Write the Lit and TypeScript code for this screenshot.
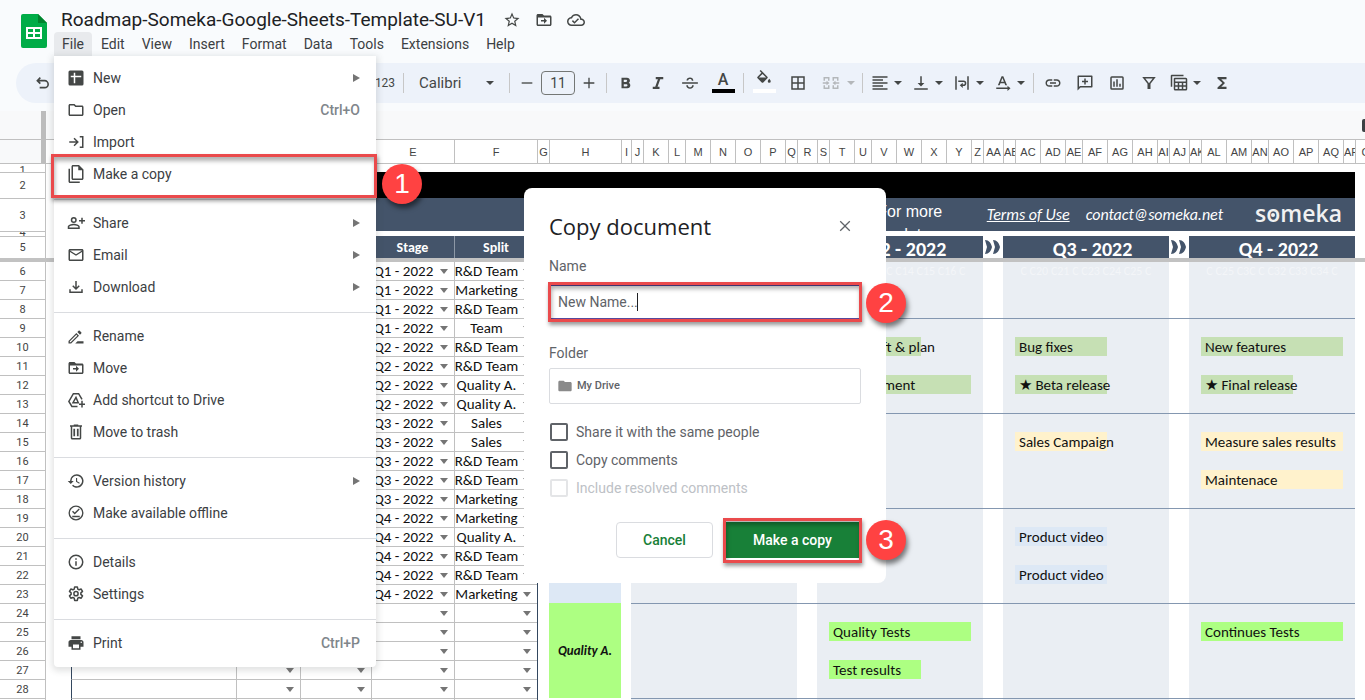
import { LitElement, html, css, svg, nothing } from "lit";
import { customElement, property } from "lit/decorators.js";

/* Icons share a 24-unit grid; each entry holds the drawing for one glyph. */
const ICONS: Record<string, unknown> = {
  star: svg`<path d="M22 9.24l-7.19-.62L12 2 9.19 8.63 2 9.24l5.46 4.73L5.82 21 12 17.27 18.18 21l-1.63-7.03L22 9.24zM12 15.4l-3.76 2.27 1-4.28-3.32-2.88 4.38-.38L12 6.1l1.71 4.04 4.38.38-3.32 2.88 1 4.28L12 15.4z"/>`,
  move: svg`<path fill-rule="evenodd" d="M20 6h-8l-2-2H4c-1.1 0-2 .9-2 2v12c0 1.1.9 2 2 2h16c1.1 0 2-.9 2-2V8c0-1.1-.9-2-2-2zm0 12H4V8.500h16v9.500zM12 17l4-4-4-4v3H8v2h4z"/>`,
  cloud: svg`<path d="M19.35 10.04C18.67 6.59 15.64 4 12 4 9.11 4 6.61 5.64 5.36 8.04 2.34 8.36 0 10.91 0 14c0 3.31 2.69 6 6 6h13c2.76 0 5-2.24 5-5 0-2.64-2.05-4.78-4.65-4.96zM19 18H6c-2.21 0-4-1.79-4-4 0-2.05 1.53-3.76 3.56-3.97l1.07-.11.5-.95C8.08 7.14 9.94 6 12 6c2.62 0 4.88 1.86 5.39 4.43l.3 1.5 1.53.11c1.56.1 2.78 1.41 2.78 2.96 0 1.65-1.35 3-3 3zm-9-3.82l-2.09-2.09L6.5 13.5 10 17l6.01-6.01-1.41-1.41z"/>`,
  undo: svg`<path d="M8 4L3.5 8.5 8 13M4 8.5h10.5a5 5 0 0 1 0 10.5H7" fill="none" stroke="currentColor" stroke-width="2.4"/>`,
  minus: svg`<path d="M4 11h16v2H4z"/>`,
  plus: svg`<path d="M11 4h2v7h7v2h-7v7h-2v-7H4v-2h7z"/>`,
  bold: svg`<path d="M15.6 11.79c.97-.67 1.65-1.77 1.65-2.79 0-2.26-1.75-4-4-4H6v14h8.04c2.09 0 3.71-1.7 3.71-3.79 0-1.52-.86-2.82-2.15-3.42zM9 7.5h3c.83 0 1.5.67 1.5 1.5s-.67 1.5-1.5 1.5H9v-3zm3.5 9H9v-3h3.5c.83 0 1.5.67 1.5 1.5s-.67 1.5-1.5 1.5z"/>`,
  italic: svg`<path d="M9 4v3h2.9L8.3 17H5v3h9v-3h-2.6L15 7h4V4z"/>`,
  strike: svg`<path d="M1.500 11h21v2h-21zM16.500 9C16.500 6 14.500 4.500 12 4.500S7.300 6 7.300 8.700h2.200C9.500 7.200 10.400 6.500 12 6.500s2.400.9 2.400 2.500zM7 15c0 3 2.200 4.700 5 4.700s5-1.700 5-4.700h-2.200c0 1.700-1.100 2.700-2.800 2.700S9.200 16.700 9.200 15z"/>`,
  fill: svg`<path d="M16.560 8.940L7.620 0 6.210 1.410l2.380 2.380-5.150 5.150a1.500 1.500 0 0 0 0 2.120l5.500 5.500c.29.29.68.44 1.060.44s.77-.15 1.060-.44l5.500-5.500c.59-.58.59-1.530 0-2.120zM5.210 10L10 5.210 14.790 10H5.210zM19 11.500s-2 2.170-2 3.500a2 2 0 0 0 4 0c0-1.330-2-3.500-2-3.500z"/>`,
  borders: svg`<path d="M3 3v18h18V3H3zm8 16H5v-6h6v6zm0-8H5V5h6v6zm8 8h-6v-6h6v6zm0-8h-6V5h6v6z"/>`,
  merge: svg`<path d="M2 4h8v5H8V6H4v3H2zM14 4h8v5h-2V6h-4v3h-2zM2 15h2v3h4v-3h2v5H2zM14 15h2v3h4v-3h2v5h-8zM1 11h5V9l4 3-4 3v-2H1zM23 11h-5V9l-4 3 4 3v-2h5z"/>`,
  align: svg`<path d="M2 3h20v2H2zM2 7h14v2H2zM2 11h20v2H2zM2 15h14v2H2zM2 19h20v2H2z"/>`,
  valign: svg`<path d="M16.500 12H13V3h-2v9H7.500l4.500 4.500zM3 19v2h18v-2z"/>`,
  wrap: svg`<path d="M3 3h2v18H3zM19 3h2v18h-2zM7 8.500h7a3.750 3.750 0 0 1 0 7.500h-1v2.500L9 15l4-3.500V14h1a1.750 1.750 0 0 0 0-3.500H7z"/>`,
  rotate: svg`<path d="M10.100 3h2.300l5 12h-2.300l-1.100-2.800H8.600L7.500 15H5.200zm-.8 7.200h3.900L11.250 5.300zM3 18h15v-2.500l4 3.500-4 3.500V20H3z"/>`,
  link: svg`<path d="M3.900 12c0-1.710 1.390-3.100 3.100-3.100h4V7H7c-2.760 0-5 2.240-5 5s2.240 5 5 5h4v-1.900H7c-1.710 0-3.100-1.390-3.100-3.100zM8 13h8v-2H8v2zm9-6h-4v1.900h4c1.710 0 3.100 1.390 3.100 3.100s-1.390 3.100-3.100 3.100h-4V17h4c2.760 0 5-2.240 5-5s-2.240-5-5-5z"/>`,
  comment: svg`<path fill-rule="evenodd" d="M3 2h18a1 1 0 0 1 1 1v14a1 1 0 0 1-1 1H6l-4 4V3a1 1 0 0 1 1-1zm1 2v13.200L5.200 16H20V4zM11 6h2v3h3v2h-3v3h-2v-3H8V9h3z"/>`,
  chart: svg`<path fill-rule="evenodd" d="M5 3h14a2 2 0 0 1 2 2v14a2 2 0 0 1-2 2H5a2 2 0 0 1-2-2V5a2 2 0 0 1 2-2zm0 2v14h14V5zM7 10h2v7H7zM11 7h2v10h-2zM15 13h2v4h-2z"/>`,
  filter: svg`<path fill-rule="evenodd" d="M3 4h18l-7 9v7h-4v-7zm4.100 2l4.900 6.300L16.900 6z"/>`,
  tableview: svg`<path d="M2 1h16v2H3v14H1V2zM6 5h15a2 2 0 0 1 2 2v13a2 2 0 0 1-2 2H7a2 2 0 0 1-2-2V6zm1 2v3h14V7zm0 5v3h3.300v-3zm5.300 0v3h3.400v-3zm5.400 0v3H21v-3zM7 17v3h3.300v-3zm5.300 0v3h3.400v-3zm5.400 0v3H21v-3z" fill-rule="evenodd"/>`,
  sigma: svg`<path d="M18 4H6v2l6.500 6L6 18v2h12v-3h-7l5-5-5-5h7z"/>`,
  grid: svg`<path fill-rule="evenodd" d="M4 2h16a2 2 0 0 1 2 2v16a2 2 0 0 1-2 2H4a2 2 0 0 1-2-2V4a2 2 0 0 1 2-2zm5 3v4H5v2h4v8h2v-8h8V9h-8V5z"/>`,
  folder: svg`<path d="M9.170 6l2 2H20v10H4V6h5.170M10 4H4c-1.100 0-2 .9-2 2v12c0 1.100.9 2 2 2h16c1.100 0 2-.9 2-2V8c0-1.100-.9-2-2-2h-8l-2-2z"/>`,
  folderSolid: svg`<path d="M10 4H4c-1.100 0-2 .9-2 2v12c0 1.100.9 2 2 2h16c1.100 0 2-.9 2-2V8c0-1.100-.9-2-2-2h-8l-2-2z"/>`,
  import: svg`<path d="M3 11h9L8.700 7.700l1.400-1.400L15.800 12l-5.700 5.700-1.400-1.400L12 13H3zM17 4h5v16h-5v-2h3V6h-3z"/>`,
  copy: svg`<path d="M16 0H8c-1.100 0-2 .9-2 2v16c0 1.100.9 2 2 2h12c1.100 0 2-.9 2-2V6zm4 18H8V2h7v5h5zM4 5H2v17c0 1.100.9 2 2 2h13v-2H4z"/>`,
  share: svg`<path d="M9 12a4 4 0 1 0 0-8 4 4 0 0 0 0 8zm0-6a2 2 0 1 1 0 4 2 2 0 0 1 0-4zm0 7c-2.670 0-8 1.340-8 4v3h16v-3c0-2.660-5.330-4-8-4zm6 5H3v-1c0-.7 3.100-2 6-2s6 1.300 6 2zM19 5h2v3h3v2h-3v3h-2v-3h-3V8h3z"/>`,
  email: svg`<path d="M22 6c0-1.100-.9-2-2-2H4c-1.100 0-2 .9-2 2v12c0 1.100.9 2 2 2h16c1.100 0 2-.9 2-2V6zm-2 0l-8 5-8-5h16zm0 12H4V8l8 5 8-5v10z"/>`,
  download: svg`<path d="M17 11l-1.410-1.410L13 12.170V4h-2v8.170L8.410 9.590 7 11l5 5 5-5zM3 15v5h18v-5h-2v3H5v-3z"/>`,
  rename: svg`<path fill-rule="evenodd" d="M2 18.500V22h3.500L16 11.500 12.500 8zM12.500 10.300l1.200 1.200L4.900 20.300H3.800v-1.200zM19 8.500c.4-.4.4-1 0-1.400L16.900 5c-.4-.4-1-.4-1.400 0l-1.700 1.700 3.500 3.500zM14 19h8v3H11z"/>`,
  drive: svg`<path d="M14 20.500H6.500L2.500 14 8.500 3.500h7l4.500 7.700" fill="none" stroke="currentColor" stroke-width="2"/><path d="M12 8.500L8 15.500h7z" fill="none" stroke="currentColor" stroke-width="2"/><path d="M19 13h2v3.500h3v2h-3V22h-2v-3.500h-3v-2h3z"/>`,
  trash: svg`<path fill-rule="evenodd" d="M15 3V2H9v1H4v2h1v15c0 1.100.9 2 2 2h10c1.100 0 2-.9 2-2V5h1V3zM7 5h10v15H7zM8.500 7.500h2.300v10H8.500zM13.200 7.500h2.300v10h-2.300z"/>`,
  history: svg`<path d="M13 3a9 9 0 0 0-9 9H1l4 4 4-4H6a7 7 0 1 1 2.100 5L6.700 18.400A9 9 0 1 0 13 3zm-1 5v5l4.300 2.500.7-1.200-3.500-2.100V8z"/>`,
  offline: svg`<path d="M12 2a10 10 0 1 0 0 20 10 10 0 0 0 0-20zm0 18.200a8.200 8.200 0 1 1 0-16.400 8.200 8.200 0 0 1 0 16.400zM7 15.500h10v2H7zM10.300 14L6.700 10.400 8 9.100l2.300 2.300 5.400-5.400L17 7.300z"/>`,
  info: svg`<path d="M11 7h2v2h-2zm0 4h2v6h-2zm1-9a10 10 0 1 0 0 20 10 10 0 0 0 0-20zm0 18a8 8 0 1 1 0-16 8 8 0 0 1 0 16z"/>`,
  gear: svg`<path fill="none" stroke="currentColor" stroke-width="2" stroke-linejoin="round" d="M10.200 2.500h3.600l.6 2.900 1.700 1 2.800-1 1.800 3.100-2.200 2v2l2.200 2-1.800 3.100-2.800-1-1.700 1-.6 2.900h-3.600l-.6-2.900-1.700-1-2.800 1-1.800-3.100 2.200-2v-2l-2.200-2 1.800-3.100 2.800 1 1.700-1z"/><circle cx="12" cy="11.500" r="2.800" fill="none" stroke="currentColor" stroke-width="2"/>`,
  print: svg`<path d="M19 8H5c-1.660 0-3 1.340-3 3v6h4v4h12v-4h4v-6c0-1.660-1.340-3-3-3zm-3 11H8v-5h8v5zm3-7c-.55 0-1-.45-1-1s.45-1 1-1 1 .45 1 1-.45 1-1 1zm-1-9H6v4h12V3z"/>`,
  close: svg`<path d="M19 6.200L17.800 5 12 10.800 6.200 5 5 6.200l5.800 5.800L5 17.800 6.200 19l5.800-5.800 5.800 5.800 1.200-1.200-5.800-5.800z"/>`,
};

const icon = (name: string) =>
  html`<svg class="icon" viewBox="0 0 24 24" aria-hidden="true">${ICONS[name]}</svg>`;

const base = css`
  *, *::before, *::after { box-sizing: border-box; }
  button { border: 0; padding: 0; margin: 0; background: none; font: inherit; color: inherit; }
  .icon { width: 18px; height: 18px; fill: currentColor; flex: none; display: block; }
  .badge {
    position: absolute; width: 40px; height: 40px; border-radius: 50%;
    background: #ff4242; color: #fff; display: grid; place-items: center;
    font: 28px/40px "Liberation Sans", sans-serif;
    box-shadow: 2px 4px 5px rgba(0, 0, 0, .5);
  }
  .frame {
    position: absolute; border: 3px solid #ea4a4c; pointer-events: none;
    box-shadow: 1px 3px 4px rgba(0, 0, 0, .4), inset 1px 4px 4px rgba(0, 0, 0, .3);
  }
`;

/* ---------- file menu ---------- */

type Entry = { icon: string; label: string; keys?: string; sub?: boolean; mark?: boolean };
const FILE_MENU: Entry[][] = [
  [
    { icon: "grid", label: "New", sub: true },
    { icon: "folder", label: "Open", keys: "Ctrl+O" },
    { icon: "import", label: "Import" },
    { icon: "copy", label: "Make a copy", mark: true },
  ],
  [
    { icon: "share", label: "Share", sub: true },
    { icon: "email", label: "Email", sub: true },
    { icon: "download", label: "Download", sub: true },
  ],
  [
    { icon: "rename", label: "Rename" },
    { icon: "move", label: "Move" },
    { icon: "drive", label: "Add shortcut to Drive" },
    { icon: "trash", label: "Move to trash" },
  ],
  [
    { icon: "history", label: "Version history", sub: true },
    { icon: "offline", label: "Make available offline" },
  ],
  [
    { icon: "info", label: "Details" },
    { icon: "gear", label: "Settings" },
  ],
  [{ icon: "print", label: "Print", keys: "Ctrl+P" }],
];

@customElement("file-menu")
export class FileMenu extends LitElement {
  static styles = [base, css`
    :host {
      display: block; width: 322px; padding: 6px 0 8px; background: #fff;
      border-radius: 0 0 4px 4px; color: #3c4043;
      font: 14px/32px Roboto, sans-serif;
      box-shadow: 0 2px 6px 2px rgba(60, 64, 67, .15);
    }
    .item {
      position: relative; display: flex; align-items: center; width: 100%;
      height: 32px; padding: 0 16px 0 13px; text-align: left;
    }
    .icon { margin-right: 8px; color: #444746; }
    .keys { margin-left: auto; color: #80868b; font-weight: 500; }
    .arrow {
      margin-left: auto; border: 4px solid transparent;
      border-left: 7px solid #757575; border-right: 0;
    }
    hr { border: 0; border-top: 1px solid #dadce0; margin: 9px 0 7px; }
    .frame { inset: -4px -1px -8px -3px; }
    .badge { left: 328px; top: 6px; }
  `];

  render() {
    return FILE_MENU.map((group, i) => html`
      ${i ? html`<hr>` : nothing}
      ${group.map((e) => html`
        <button class="item">
          ${icon(e.icon)}<span>${e.label}</span>
          ${e.keys ? html`<span class="keys">${e.keys}</span>` : nothing}
          ${e.sub ? html`<span class="arrow"></span>` : nothing}
          ${e.mark ? html`<span class="frame"></span><span class="badge">1</span>` : nothing}
        </button>`)}
    `);
  }
}

/* ---------- copy dialog ---------- */

@customElement("copy-dialog")
export class CopyDialog extends LitElement {
  static styles = [base, css`
    :host {
      display: block; width: 362px; padding: 22px 25px 25px; background: #fff;
      border-radius: 8px; color: #5f6368; font: 14px/20px Roboto, sans-serif;
    }
    .head { display: flex; align-items: center; justify-content: space-between; }
    h1 { margin: 0; font: 400 22px/30px "Open Sans", sans-serif; color: #202124; }
    .close { padding: 7px; }
    .close .icon { width: 18px; height: 18px; color: #5f6368; }
    .label { display: block; margin: 14px 0 8px; }
    .field { position: relative; }
    .text {
      display: block; width: 100%; height: 36px; padding: 0 7px; margin: 0;
      border: 2px solid #5a4a9c; border-radius: 2px; outline: 0; background: #fff;
      font: 14px/20px Roboto, sans-serif; color: #5f6368;
    }
    .caret { position: absolute; left: 88px; top: 9px; width: 1px; height: 18px; background: #202124; }
    .field .frame { inset: -2px -1px; }
    .field .badge { left: 317px; top: -1px; }
    .field + .label { margin-top: 23px; margin-bottom: 5px; }
    .folder {
      display: flex; align-items: center; gap: 4px; width: 100%; height: 36px; padding: 0 7px;
      border: 1px solid #dadce0; border-radius: 2px; font-size: 11px; font-weight: 500;
    }
    .folder .icon { width: 16px; height: 16px; color: #8a8a8a; }
    .checks { display: grid; gap: 8px; margin: 18px 0 24px; }
    .check { display: flex; align-items: center; gap: 8px; }
    .check input {
      appearance: none; width: 18px; height: 18px; margin: 0 0 0 1px;
      border: 2px solid #5f6368; border-radius: 2px; background: #fff;
    }
    .check.off { color: #bdc1c6; }
    .check.off input { border-color: #e4e5e7; }
    .actions { display: flex; justify-content: flex-end; gap: 13px; font-weight: 500; }
    .cancel {
      width: 97px; height: 36px; border: 1px solid #dadce0; border-radius: 4px; color: #188038;
    }
    .primary { position: relative; width: 133px; height: 36px; margin-right: 2px; background: #188038; color: #fff; }
    .primary .frame { inset: -4px -3px -5px; }
    .primary .badge { left: 140px; top: -2px; font-weight: 400; }
  `];

  render() {
    return html`
      <div class="head">
        <h1>Copy document</h1>
        <button class="close" aria-label="Close">${icon("close")}</button>
      </div>
      <label class="label" for="name">Name</label>
      <div class="field">
        <input class="text" id="name" value="New Name...">
        <span class="caret"></span><span class="frame"></span><span class="badge">2</span>
      </div>
      <label class="label" for="folder">Folder</label>
      <button class="folder" id="folder">${icon("folderSolid")}<span>My Drive</span></button>
      <div class="checks">
        <label class="check"><input type="checkbox">Share it with the same people</label>
        <label class="check"><input type="checkbox">Copy comments</label>
        <label class="check off"><input type="checkbox" disabled>Include resolved comments</label>
      </div>
      <div class="actions">
        <button class="cancel">Cancel</button>
        <button class="primary">Make a copy<span class="frame"></span><span class="badge">3</span></button>
      </div>
    `;
  }
}

/* ---------- sheet ---------- */

const COLUMNS: [string, number][] = [
  ["A", 25], ["B", 165], ["C", 64], ["D", 71], ["E", 83], ["F", 83], ["G", 12], ["H", 72],
  ["I", 10], ["J", 12], ["K", 25], ["L", 17], ["M", 25], ["N", 25], ["O", 25], ["P", 25], ["Q", 12],
  ["R", 20], ["S", 12], ["T", 25], ["U", 17], ["V", 25], ["W", 25], ["X", 25], ["Y", 25], ["Z", 12],
  ["AA", 20], ["AB", 12], ["AC", 25], ["AD", 25], ["AE", 17], ["AF", 25], ["AG", 25], ["AH", 25], ["AI", 12],
  ["AJ", 20], ["AK", 12], ["AL", 25], ["AM", 25], ["AN", 17], ["AO", 25], ["AP", 25], ["AQ", 25], ["AR", 12],
  ["CN", 28],
];
const ROW_HEAD = 46;
const SHEET_WIDTH = COLUMNS.reduce((sum, c) => sum + c[1], ROW_HEAD);

const STAGES = ["Q1", "Q1", "Q1", "Q1", "Q2", "Q2", "Q2", "Q2", "Q3", "Q3", "Q3", "Q3", "Q3", "Q4", "Q4", "Q4", "Q4", "Q4"];
const R = "R&D Team", M = "Marketing", Q = "Quality A.", S = "Sales";
const SPLITS = [R, M, R, "Team", R, R, Q, Q, S, S, R, R, M, M, Q, R, R, M];

type Bar = { row: number; quarter: number; text: string; long?: boolean };
type Lane = { first: number; last: number; tone: string; title?: string };
const LANES: Lane[] = [
  { first: 6, last: 8, tone: "plain" },
  { first: 9, last: 13, tone: "green" },
  { first: 14, last: 18, tone: "yellow" },
  { first: 19, last: 23, tone: "blue" },
  { first: 24, last: 28, tone: "lime", title: "Quality A." },
  { first: 29, last: 29, tone: "plain" },
];
const BARS: Bar[] = [
  { row: 10, quarter: 1, text: "First draft & plan" },
  { row: 12, quarter: 1, text: "Development", long: true },
  { row: 10, quarter: 2, text: "Bug fixes" },
  { row: 12, quarter: 2, text: "★ Beta release" },
  { row: 10, quarter: 3, text: "New features", long: true },
  { row: 12, quarter: 3, text: "★ Final release" },
  { row: 15, quarter: 2, text: "Sales Campaign" },
  { row: 15, quarter: 3, text: "Measure sales results", long: true },
  { row: 17, quarter: 3, text: "Maintenace", long: true },
  { row: 20, quarter: 2, text: "Product video" },
  { row: 22, quarter: 2, text: "Product video" },
  { row: 25, quarter: 1, text: "Quality Tests", long: true },
  { row: 27, quarter: 1, text: "Test results" },
  { row: 25, quarter: 3, text: "Continues Tests", long: true },
];
const GHOSTS = ["", "C C10 C11 C C14 C15 C16 C", "C C20 C21 C C23 C24 C25 C", "C C25 C3C C C32 C33 C34 C"];

@customElement("sheet-grid")
export class SheetGrid extends LitElement {
  @property({ type: Number }) rows = 29;

  static styles = [base, css`
    :host { display: block; overflow: hidden; background: #fff; font: 15px/18px Carlito, Lato, sans-serif; color: #111; }
    table { table-layout: fixed; border-collapse: separate; border-spacing: 0; }
    th, td { padding: 0; overflow: visible; white-space: nowrap; }
    .letters th {
      height: 25px; border: 1px solid #c0c0c0; border-width: 1px 0 1px 1px;
      font: 11px/22px "Liberation Sans", sans-serif; color: #444; overflow: hidden;
    }
    .letters .corner { border-left: 0; border-right: 5px solid #bcbcbc; background: #f8f9fa; }
    .letters .corner + th { border-left: 0; }
    .num {
      border-right: 1px solid #c0c0c0; border-top: 1px solid #c0c0c0;
      font: 11px/17px Roboto, sans-serif; color: #444; text-align: center;
    }
    .clip { overflow: hidden; display: block; }
    .r1 td { height: 8px; } .r1 .num { border-top: 0; } .r1 .clip { height: 7px; line-height: 11px; }
    .r2 td { height: 26px; }
    .r3 td { height: 33px; }
    .r4 td { height: 5px; } .r4 .clip { height: 4px; line-height: 1px; }
    .r5 td { height: 22px; }
    .bar-freeze td { height: 4px; background: #c2c2c2; }
    .row td { height: 19px; }
    .row.first td { height: 18px; border-top: 0; }
    .black { background: #000; }
    .navy { background: #44546a; color: #fff; }
    .brand { display: flex; align-items: center; justify-content: flex-end; height: 33px; padding-right: 13px; overflow: hidden; }
    .more { width: 100px; height: 33px; padding-top: 2px; margin-right: 27px; text-align: center; font: 16px/23px "Liberation Sans", sans-serif; }
    .terms { color: #fff; font-style: italic; font-size: 16px; margin-right: 16px; }
    .mail { font-style: italic; font-size: 16px; margin-right: 32px; }
    .logo { font: 600 23px/28px "Open Sans", sans-serif; color: #f1f1f1; padding-bottom: 3px; }
    .logo .o { position: relative; }
    .logo .o::after { content: ""; position: absolute; left: 5px; top: 16px; width: 4px; height: 4px; border-radius: 50%; background: #f1f1f1; }
    .head { text-align: center; font-weight: 700; font-size: 14px; padding-top: 2px; }
    .r5 td.split { border-left: 1px solid #8d98a6; }
    .quarter { text-align: center; font-weight: 700; font-size: 20px; line-height: 22px; padding-left: 13px; }
    .quarter .clip { height: 22px; padding-top: 2px; }
    .chev svg { display: block; width: 18px; height: 16px; fill: #44546a; }
    .cell { border-top: 1px solid #c0c0c0; border-left: 1px solid #c0c0c0; }
    .cell.edge, .cap.edge { border-left: 1px solid #33475f; }
    .pick { display: flex; align-items: center; height: 17px; }
    .pick span { flex: 1; text-align: center; min-width: 0; display: flex; justify-content: center; }
    .pick::after { content: ""; flex: none; margin: 0 6px 0 5px; border: 4px solid transparent; border-top: 5px solid #757575; border-bottom: 0; }
    .q { background: #eaeef3; padding: 0 12px; }
    .line { border-top: 1px solid #8497b0; }
    .first .line { border-top: 0; }
    .bar { width: 92px; height: 19px; padding-left: 4px; line-height: 20px; }
    .bar.long { width: 142px; }
    .lane { text-align: center; font-weight: 700; font-style: italic; font-size: 13px; }
    .green { background: #c6e0b4; } .yellow { background: #fff2cc; }
    .blue { background: #dde8f5; } .lime { background: #adff82; }
    .ghost { display: block; height: 18px; margin: 0 -8px; color: #f3f5f8; font-size: 12px; text-align: center; overflow: hidden; }
  `];

  private chevrons() {
    return html`<td class="chev"><svg viewBox="0 0 18 16"><path d="M2 1c4 0 6 3 7 7-1 4-3 7-7 7l2-7zM10 1c4 0 6 3 7 7-1 4-3 7-7 7l2-7z"/></svg></td>`;
  }

  private bodyRow(n: number) {
    const lane = LANES.find((l) => n >= l.first && n <= l.last)!;
    const opens = lane.first === n && n > 6;
    const line = opens ? "line" : "";
    const i = n - 6;
    return html`
      <tr class="row ${n === 6 ? "first" : ""}">
        <td class="num">${n}</td>
        <td></td>
        <td class="cell edge"></td>
        <td class="cell"><div class="pick"><span></span></div></td>
        <td class="cell"><div class="pick"><span></span></div></td>
        <td class="cell"><div class="pick"><span>${STAGES[i] ? `${STAGES[i]} - 2022` : ""}</span></div></td>
        <td class="cell"><div class="pick"><span>${SPLITS[i] ?? ""}</span></div></td>
        <td class="cap edge"></td>
        ${lane.first === n
          ? html`<td class="lane ${lane.tone}" rowspan=${lane.last - lane.first + 1}>${lane.title ?? ""}</td>`
          : nothing}
        <td></td>
        ${[0, 1, 2, 3].map((q) => {
          const bar = BARS.find((b) => b.row === n && b.quarter === q);
          return html`
            ${q ? html`<td class=${line}></td>` : nothing}
            <td class="q ${line}" colspan="8">
              ${bar ? html`<div class="bar ${lane.tone} ${bar.long ? "long" : ""}">${bar.text}</div>` : nothing}
              ${n === 6 ? html`<span class="ghost">${GHOSTS[q]}</span>` : nothing}
            </td>`;
        })}
        <td></td>
      </tr>`;
  }

  render() {
    const all = COLUMNS.length;
    const body: number[] = [];
    for (let n = 6; n <= this.rows; n++) body.push(n);
    return html`
      <table style="width:${SHEET_WIDTH}px">
        <colgroup>
          <col style="width:${ROW_HEAD}px">
          ${COLUMNS.map((c) => html`<col style="width:${c[1]}px">`)}
        </colgroup>
        <thead>
          <tr class="letters"><th class="corner"></th>${COLUMNS.map((c) => html`<th>${c[0]}</th>`)}</tr>
        </thead>
        <tbody>
          <tr class="r1"><td class="num"><span class="clip">1</span></td><td colspan=${all}></td></tr>
          <tr class="r2"><td class="num">2</td><td></td><td class="black" colspan=${all - 2}></td><td></td></tr>
          <tr class="r3">
            <td class="num">3</td><td></td>
            <td class="navy" colspan=${all - 2}>
              <div class="brand">
                <div class="more">For more<br>updates</div>
                <a class="terms" href="#terms">Terms of Use</a>
                <span class="mail">contact@someka.net</span>
                <span class="logo">s<span class="o">o</span>meka</span>
              </div>
            </td><td></td>
          </tr>
          <tr class="r4"><td class="num"><span class="clip">4</span></td><td colspan=${all}></td></tr>
          <tr class="r5">
            <td class="num">5</td><td></td>
            <td class="navy" colspan="3"></td>
            <td class="navy head">Stage</td><td class="navy head split">Split</td>
            <td></td><td></td><td></td>
            ${[1, 2, 3, 4].map((q) => html`
              ${q > 1 ? this.chevrons() : nothing}
              <td class="navy quarter" colspan="8"><span class="clip">Q${q} - 2022</span></td>`)}
            <td></td>
          </tr>
          <tr class="bar-freeze"><td colspan=${all + 1}></td></tr>
          ${body.map((n) => this.bodyRow(n))}
        </tbody>
      </table>`;
  }
}

/* ---------- page ---------- */

@customElement("app-root")
export class AppRoot extends LitElement {
  static styles = [base, css`
    :host {
      position: relative; display: flex; flex-direction: column; height: 100vh;
      overflow: hidden; background: #f9fbfd; color: #202124;
      font: 14px/24px Roboto, sans-serif;
    }
    header { display: flex; flex: none; height: 63px; padding-left: 21px; }
    .sheets { width: 26px; height: 34px; margin: 14px 7px 0 0; flex: none; }
    .name { display: flex; align-items: center; gap: 14px; height: 32px; padding: 7px 0 0 7px; color: #444746; }
    .title { margin-right: 3px; font-size: 19px; color: #202124; }
    .menubar { display: flex; gap: 1px; color: #3c4043; }
    .menubar button { height: 24px; padding: 0 8px; }
    .menubar .open { background: #e8eaed; border-radius: 4px 4px 0 0; }
    .toolbar {
      display: flex; flex: none; align-items: center; height: 40px; margin-left: 16px; padding-left: 18px;
      background: #edf2fa; border-radius: 20px 0 0 20px; color: #444746;
    }
    .tool { display: flex; justify-content: center; align-items: center; width: 32px; height: 32px; flex: none; }
    .tool .icon { width: 18px; height: 18px; }
    .undo { width: 18px; margin-right: 318px; }
    .undo .icon { width: 16px; height: 16px; }
    .n123 { width: 30px; font-size: 12px; }
    .sep { width: 1px; height: 20px; margin: 0 3px; background: #c7c7c7; flex: none; }
    .wide { width: 34px; }
    .drop { width: 41px; justify-content: flex-start; padding-left: 5px; gap: 5px; }
    .drop.merge { width: 44px; padding-left: 7px; gap: 7px; color: #b4b7ba; }
    .drop::after, .font::after { content: ""; border: 4px solid transparent; border-top-color: currentColor; border-bottom: 0; flex: none; }
    .font { display: flex; align-items: center; width: 99px; padding: 0 12px; flex: none; }
    .font select { appearance: none; border: 0; background: none; flex: 1; min-width: 0; padding: 0; font: 15px/20px Roboto, sans-serif; color: inherit; }
    .step { width: 28px; }
    .step .icon { width: 16px; height: 16px; }
    .size {
      width: 34px; height: 24px; padding: 0; margin: 0; border: 1px solid #747775; border-radius: 4px;
      background: none; text-align: center; font: 14px/20px Roboto, sans-serif; color: #444746; flex: none;
    }
    .ink { flex-direction: column; justify-content: flex-end; width: 34px; font: 500 16px/17px Roboto, sans-serif; padding-bottom: 6px; }
    .ink::after { content: ""; width: 23px; height: 4px; background: #000; margin-top: 1px; }
    .paint::after { background: #fff; }
    .paint .icon { width: 18px; height: 18px; }
    .formula { position: relative; flex: none; display: flex; height: 28px; margin-top: 8px; background: #f8f9fa; }
    .handle { width: 46px; border-right: 5px solid #bcbcbc; }
    .tab { position: absolute; right: -10px; top: 8px; width: 13px; height: 13px; border-radius: 2px; background: #3c4043; }
    sheet-grid { flex: 1; min-height: 0; }
    file-menu { position: absolute; left: 54px; top: 56px; z-index: 2; }
    copy-dialog { position: absolute; left: 524px; top: 188px; z-index: 1; }
  `];

  private tool(name: string, label: string, cls = "") {
    return html`<button class="tool ${cls}" aria-label=${label}>${icon(name)}</button>`;
  }

  render() {
    const sep = html`<span class="sep"></span>`;
    return html`
      <header>
        <svg class="sheets" viewBox="0 0 26 34" aria-hidden="true">
          <path d="M2 0h15l9 9v23a2 2 0 0 1-2 2H2a2 2 0 0 1-2-2V2a2 2 0 0 1 2-2z" fill="#00ac47"/>
          <path d="M17 0l9 9h-9z" fill="#00832d"/>
          <path fill="#fff" fill-rule="evenodd" d="M5 13h16v12H5zM7 15v3h5v-3zm7 0v3h5v-3zm-7 5v3h5v-3zm7 0v3h5v-3z"/>
        </svg>
        <div>
          <div class="name">
            <span class="title">Roadmap-Someka-Google-Sheets-Template-SU-V1</span>
            ${icon("star")}${icon("move")}${icon("cloud")}
          </div>
          <nav class="menubar">
            ${["File", "Edit", "View", "Insert", "Format", "Data", "Tools", "Extensions", "Help"].map(
              (m) => html`<button class=${m === "File" ? "open" : ""}>${m}</button>`)}
          </nav>
        </div>
      </header>
      <div class="toolbar">
        ${this.tool("undo", "Undo", "undo")}
        <button class="tool n123">123</button>
        ${sep}
        <div class="font"><select aria-label="Font"><option>Calibri</option></select></div>
        ${sep}
        ${this.tool("minus", "Decrease font size", "step")}
        <input class="size" aria-label="Font size" value="11">
        ${this.tool("plus", "Increase font size", "step")}
        ${sep}
        ${this.tool("bold", "Bold")}${this.tool("italic", "Italic")}${this.tool("strike", "Strikethrough")}
        <button class="tool ink" aria-label="Text color">A</button>
        ${sep}
        ${this.tool("fill", "Fill color", "ink paint")}
        ${this.tool("borders", "Borders", "wide")}
        ${this.tool("merge", "Merge cells", "drop merge")}
        ${sep}
        ${this.tool("align", "Horizontal align", "drop")}${this.tool("valign", "Vertical align", "drop")}
        ${this.tool("wrap", "Text wrapping", "drop")}${this.tool("rotate", "Text rotation", "drop")}
        ${sep}
        ${this.tool("link", "Insert link")}${this.tool("comment", "Insert comment")}
        ${this.tool("chart", "Insert chart")}${this.tool("filter", "Create a filter")}
        ${this.tool("tableview", "Filter views", "drop")}${this.tool("sigma", "Functions")}
      </div>
      <div class="formula"><span class="handle"></span><span class="tab"></span></div>
      <sheet-grid></sheet-grid>
      <file-menu></file-menu>
      <copy-dialog role="dialog" aria-label="Copy document"></copy-dialog>
    `;
  }
}
